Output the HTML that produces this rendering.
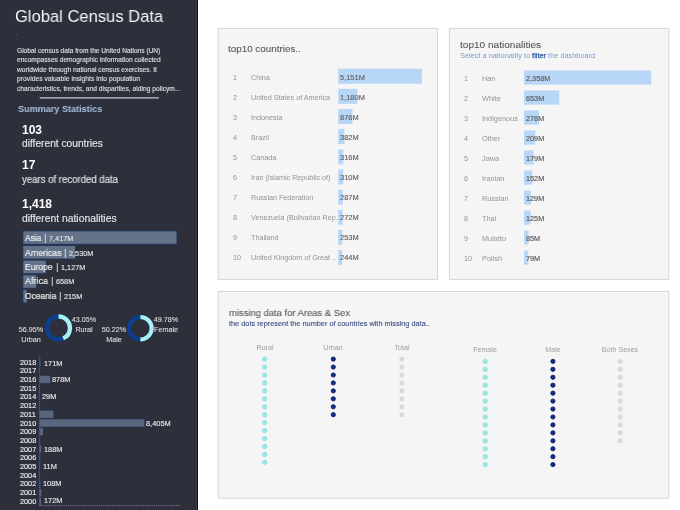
<!DOCTYPE html>
<html lang="en">
<head>
<meta charset="utf-8">
<title>Global Census Data</title>
<style>
html,body{margin:0;padding:0;width:680px;height:510px;overflow:hidden;}
body{width:680px;height:510px;position:relative;overflow:hidden;background:#ffffff;font-family:"Liberation Sans",sans-serif;}
.t{position:absolute;white-space:nowrap;will-change:transform;}
#g{position:absolute;left:0;top:0;}
</style>
</head>
<body>
<svg id="g" width="680" height="510" viewBox="0 0 680 510">
<rect x="0" y="0" width="196.4" height="510" fill="#2d2f3b"/>
<rect x="196.3" y="0" width="1.7" height="510" fill="#0e0f1b"/>
<rect x="16.2" y="34.4" width="0.9" height="0.9" fill="#6a6d7c"/>
<rect x="39.7" y="97.1" width="119.2" height="1.5" fill="#a9afc4"/>
<rect x="22.7" y="230.7" width="154.5" height="13.8" fill="#213c6b"/>
<rect x="23.4" y="231.4" width="153.1" height="12.4" fill="#647389"/>
<rect x="22.7" y="245.35" width="53" height="13.8" fill="#213c6b"/>
<rect x="23.4" y="246.05" width="51.6" height="12.4" fill="#647389"/>
<rect x="22.7" y="260" width="23.6" height="13.8" fill="#213c6b"/>
<rect x="23.4" y="260.7" width="22.2" height="12.4" fill="#647389"/>
<rect x="22.7" y="274.65" width="14" height="13.8" fill="#213c6b"/>
<rect x="23.4" y="275.35" width="12.6" height="12.4" fill="#647389"/>
<rect x="22.7" y="289.3" width="4.5" height="13.8" fill="#213c6b"/>
<rect x="23.4" y="290" width="3.1" height="12.4" fill="#647389"/>
<circle cx="58.5" cy="327.9" r="11.45" fill="none" stroke="#0c3f94" stroke-width="4.3"/>
<circle cx="58.5" cy="327.9" r="11.45" fill="none" stroke="#a6f1f2" stroke-width="4.3" stroke-dasharray="30.97 71.94" transform="rotate(-90 58.5 327.9)"/>
<circle cx="140.4" cy="328.2" r="11.25" fill="none" stroke="#0c3f94" stroke-width="4.1"/>
<circle cx="140.4" cy="328.2" r="11.25" fill="none" stroke="#a6f1f2" stroke-width="4.1" stroke-dasharray="35.19 70.69" transform="rotate(-90 140.4 328.2)"/>
<rect x="39.3" y="358.1" width="1.8" height="7.9" fill="#2a4473"/>
<rect x="39.3" y="366.81" width="1" height="7.9" fill="#2a4473"/>
<rect x="39.3" y="375.51" width="11.2" height="7.9" fill="#2a4473"/>
<rect x="39.7" y="375.91" width="10.4" height="7.1" fill="#5a667e"/>
<rect x="39.3" y="384.22" width="0.9" height="7.9" fill="#2a4473"/>
<rect x="39.3" y="392.92" width="1" height="7.9" fill="#2a4473"/>
<rect x="39.3" y="401.63" width="1" height="7.9" fill="#2a4473"/>
<rect x="39.3" y="410.34" width="14.4" height="7.9" fill="#2a4473"/>
<rect x="39.7" y="410.74" width="13.6" height="7.1" fill="#5a667e"/>
<rect x="39.3" y="419.04" width="105.3" height="7.9" fill="#2a4473"/>
<rect x="39.7" y="419.44" width="104.5" height="7.1" fill="#5a667e"/>
<rect x="39.3" y="427.75" width="4" height="7.9" fill="#2a4473"/>
<rect x="39.7" y="428.15" width="3.2" height="7.1" fill="#5a667e"/>
<rect x="39.3" y="436.45" width="1" height="7.9" fill="#2a4473"/>
<rect x="39.3" y="445.16" width="2.1" height="7.9" fill="#2a4473"/>
<rect x="39.7" y="445.56" width="1.3" height="7.1" fill="#5a667e"/>
<rect x="39.3" y="453.87" width="1.6" height="7.9" fill="#2a4473"/>
<rect x="39.3" y="462.57" width="1" height="7.9" fill="#2a4473"/>
<rect x="39.3" y="471.28" width="1" height="7.9" fill="#2a4473"/>
<rect x="39.3" y="479.98" width="1.6" height="7.9" fill="#2a4473"/>
<rect x="39.3" y="488.69" width="2.2" height="7.9" fill="#2a4473"/>
<rect x="39.7" y="489.09" width="1.4" height="7.1" fill="#5a667e"/>
<rect x="39.3" y="497.4" width="2.1" height="7.9" fill="#2a4473"/>
<rect x="39.7" y="497.8" width="1.3" height="7.1" fill="#5a667e"/>
<line x1="39.4" y1="357" x2="39.4" y2="505.6" stroke="#5570a8" stroke-width="0.8" stroke-dasharray="1.2 1"/>
<line x1="39.4" y1="505.6" x2="180" y2="505.6" stroke="#8a90a4" stroke-width="0.8" stroke-dasharray="1.2 1"/>
<rect x="218.2" y="28.4" width="219.4" height="251" fill="#f5f5f5" stroke="#d5d5d5" stroke-width="1"/>
<rect x="449.4" y="28.4" width="219.4" height="251" fill="#f5f5f5" stroke="#d5d5d5" stroke-width="1"/>
<rect x="218.2" y="291.5" width="450.6" height="206.7" fill="#f5f5f5" stroke="#d5d5d5" stroke-width="1"/>
<rect x="338.2" y="68.7" width="83.7" height="15" fill="#b8d7f7"/>
<rect x="232" y="86.65" width="192" height="1" fill="#f8f8f8"/>
<rect x="338.2" y="88.85" width="19.17" height="15" fill="#b8d7f7"/>
<rect x="232" y="106.8" width="192" height="1" fill="#f8f8f8"/>
<rect x="338.2" y="109" width="14.23" height="15" fill="#b8d7f7"/>
<rect x="232" y="126.95" width="192" height="1" fill="#f8f8f8"/>
<rect x="338.2" y="129.15" width="6.21" height="15" fill="#b8d7f7"/>
<rect x="232" y="147.1" width="192" height="1" fill="#f8f8f8"/>
<rect x="338.2" y="149.3" width="5.13" height="15" fill="#b8d7f7"/>
<rect x="232" y="167.25" width="192" height="1" fill="#f8f8f8"/>
<rect x="338.2" y="169.45" width="5.04" height="15" fill="#b8d7f7"/>
<rect x="232" y="187.4" width="192" height="1" fill="#f8f8f8"/>
<rect x="338.2" y="189.6" width="4.66" height="15" fill="#b8d7f7"/>
<rect x="232" y="207.55" width="192" height="1" fill="#f8f8f8"/>
<rect x="338.2" y="209.75" width="4.42" height="15" fill="#b8d7f7"/>
<rect x="232" y="227.7" width="192" height="1" fill="#f8f8f8"/>
<rect x="338.2" y="229.9" width="4.11" height="15" fill="#b8d7f7"/>
<rect x="232" y="247.85" width="192" height="1" fill="#f8f8f8"/>
<rect x="338.2" y="250.05" width="3.96" height="15" fill="#b8d7f7"/>
<rect x="524" y="70.5" width="127.2" height="14.1" fill="#b8d7f7"/>
<rect x="463" y="87.6" width="192" height="1" fill="#f8f8f8"/>
<rect x="524" y="90.5" width="35.23" height="14.1" fill="#b8d7f7"/>
<rect x="463" y="107.6" width="192" height="1" fill="#f8f8f8"/>
<rect x="524" y="110.5" width="15" height="14.1" fill="#b8d7f7"/>
<rect x="463" y="127.6" width="192" height="1" fill="#f8f8f8"/>
<rect x="524" y="130.5" width="11.27" height="14.1" fill="#b8d7f7"/>
<rect x="463" y="147.6" width="192" height="1" fill="#f8f8f8"/>
<rect x="524" y="150.5" width="9.66" height="14.1" fill="#b8d7f7"/>
<rect x="463" y="167.6" width="192" height="1" fill="#f8f8f8"/>
<rect x="524" y="170.5" width="8.2" height="14.1" fill="#b8d7f7"/>
<rect x="463" y="187.6" width="192" height="1" fill="#f8f8f8"/>
<rect x="524" y="190.5" width="6.96" height="14.1" fill="#b8d7f7"/>
<rect x="463" y="207.6" width="192" height="1" fill="#f8f8f8"/>
<rect x="524" y="210.5" width="6.74" height="14.1" fill="#b8d7f7"/>
<rect x="463" y="227.6" width="192" height="1" fill="#f8f8f8"/>
<rect x="524" y="230.5" width="4.59" height="14.1" fill="#b8d7f7"/>
<rect x="463" y="247.6" width="192" height="1" fill="#f8f8f8"/>
<rect x="524" y="250.5" width="4.26" height="14.1" fill="#b8d7f7"/>
<circle cx="264.7" cy="359.1" r="2.6" fill="#99e6e4"/>
<circle cx="264.7" cy="367.04" r="2.6" fill="#99e6e4"/>
<circle cx="264.7" cy="374.98" r="2.6" fill="#99e6e4"/>
<circle cx="264.7" cy="382.92" r="2.6" fill="#99e6e4"/>
<circle cx="264.7" cy="390.86" r="2.6" fill="#99e6e4"/>
<circle cx="264.7" cy="398.8" r="2.6" fill="#99e6e4"/>
<circle cx="264.7" cy="406.74" r="2.6" fill="#99e6e4"/>
<circle cx="264.7" cy="414.68" r="2.6" fill="#99e6e4"/>
<circle cx="264.7" cy="422.62" r="2.6" fill="#99e6e4"/>
<circle cx="264.7" cy="430.56" r="2.6" fill="#99e6e4"/>
<circle cx="264.7" cy="438.5" r="2.6" fill="#99e6e4"/>
<circle cx="264.7" cy="446.44" r="2.6" fill="#99e6e4"/>
<circle cx="264.7" cy="454.38" r="2.6" fill="#99e6e4"/>
<circle cx="264.7" cy="462.32" r="2.6" fill="#99e6e4"/>
<circle cx="333.3" cy="359.1" r="2.1" fill="#122c8a" stroke="#0a1d6a" stroke-width="0.9"/>
<circle cx="333.3" cy="367.04" r="2.1" fill="#122c8a" stroke="#0a1d6a" stroke-width="0.9"/>
<circle cx="333.3" cy="374.98" r="2.1" fill="#122c8a" stroke="#0a1d6a" stroke-width="0.9"/>
<circle cx="333.3" cy="382.92" r="2.1" fill="#122c8a" stroke="#0a1d6a" stroke-width="0.9"/>
<circle cx="333.3" cy="390.86" r="2.1" fill="#122c8a" stroke="#0a1d6a" stroke-width="0.9"/>
<circle cx="333.3" cy="398.8" r="2.1" fill="#122c8a" stroke="#0a1d6a" stroke-width="0.9"/>
<circle cx="333.3" cy="406.74" r="2.1" fill="#122c8a" stroke="#0a1d6a" stroke-width="0.9"/>
<circle cx="333.3" cy="414.68" r="2.1" fill="#122c8a" stroke="#0a1d6a" stroke-width="0.9"/>
<circle cx="401.9" cy="359.1" r="2.5" fill="#d9d9d9"/>
<circle cx="401.9" cy="367.04" r="2.5" fill="#d9d9d9"/>
<circle cx="401.9" cy="374.98" r="2.5" fill="#d9d9d9"/>
<circle cx="401.9" cy="382.92" r="2.5" fill="#d9d9d9"/>
<circle cx="401.9" cy="390.86" r="2.5" fill="#d9d9d9"/>
<circle cx="401.9" cy="398.8" r="2.5" fill="#d9d9d9"/>
<circle cx="401.9" cy="406.74" r="2.5" fill="#d9d9d9"/>
<circle cx="401.9" cy="414.68" r="2.5" fill="#d9d9d9"/>
<circle cx="485.3" cy="361.4" r="2.6" fill="#99e6e4"/>
<circle cx="485.3" cy="369.34" r="2.6" fill="#99e6e4"/>
<circle cx="485.3" cy="377.28" r="2.6" fill="#99e6e4"/>
<circle cx="485.3" cy="385.22" r="2.6" fill="#99e6e4"/>
<circle cx="485.3" cy="393.16" r="2.6" fill="#99e6e4"/>
<circle cx="485.3" cy="401.1" r="2.6" fill="#99e6e4"/>
<circle cx="485.3" cy="409.04" r="2.6" fill="#99e6e4"/>
<circle cx="485.3" cy="416.98" r="2.6" fill="#99e6e4"/>
<circle cx="485.3" cy="424.92" r="2.6" fill="#99e6e4"/>
<circle cx="485.3" cy="432.86" r="2.6" fill="#99e6e4"/>
<circle cx="485.3" cy="440.8" r="2.6" fill="#99e6e4"/>
<circle cx="485.3" cy="448.74" r="2.6" fill="#99e6e4"/>
<circle cx="485.3" cy="456.68" r="2.6" fill="#99e6e4"/>
<circle cx="485.3" cy="464.62" r="2.6" fill="#99e6e4"/>
<circle cx="552.9" cy="361.4" r="2.1" fill="#122c8a" stroke="#0a1d6a" stroke-width="0.9"/>
<circle cx="552.9" cy="369.34" r="2.1" fill="#122c8a" stroke="#0a1d6a" stroke-width="0.9"/>
<circle cx="552.9" cy="377.28" r="2.1" fill="#122c8a" stroke="#0a1d6a" stroke-width="0.9"/>
<circle cx="552.9" cy="385.22" r="2.1" fill="#122c8a" stroke="#0a1d6a" stroke-width="0.9"/>
<circle cx="552.9" cy="393.16" r="2.1" fill="#122c8a" stroke="#0a1d6a" stroke-width="0.9"/>
<circle cx="552.9" cy="401.1" r="2.1" fill="#122c8a" stroke="#0a1d6a" stroke-width="0.9"/>
<circle cx="552.9" cy="409.04" r="2.1" fill="#122c8a" stroke="#0a1d6a" stroke-width="0.9"/>
<circle cx="552.9" cy="416.98" r="2.1" fill="#122c8a" stroke="#0a1d6a" stroke-width="0.9"/>
<circle cx="552.9" cy="424.92" r="2.1" fill="#122c8a" stroke="#0a1d6a" stroke-width="0.9"/>
<circle cx="552.9" cy="432.86" r="2.1" fill="#122c8a" stroke="#0a1d6a" stroke-width="0.9"/>
<circle cx="552.9" cy="440.8" r="2.1" fill="#122c8a" stroke="#0a1d6a" stroke-width="0.9"/>
<circle cx="552.9" cy="448.74" r="2.1" fill="#122c8a" stroke="#0a1d6a" stroke-width="0.9"/>
<circle cx="552.9" cy="456.68" r="2.1" fill="#122c8a" stroke="#0a1d6a" stroke-width="0.9"/>
<circle cx="552.9" cy="464.62" r="2.1" fill="#122c8a" stroke="#0a1d6a" stroke-width="0.9"/>
<circle cx="620.2" cy="361.4" r="2.5" fill="#d9d9d9"/>
<circle cx="620.2" cy="369.34" r="2.5" fill="#d9d9d9"/>
<circle cx="620.2" cy="377.28" r="2.5" fill="#d9d9d9"/>
<circle cx="620.2" cy="385.22" r="2.5" fill="#d9d9d9"/>
<circle cx="620.2" cy="393.16" r="2.5" fill="#d9d9d9"/>
<circle cx="620.2" cy="401.1" r="2.5" fill="#d9d9d9"/>
<circle cx="620.2" cy="409.04" r="2.5" fill="#d9d9d9"/>
<circle cx="620.2" cy="416.98" r="2.5" fill="#d9d9d9"/>
<circle cx="620.2" cy="424.92" r="2.5" fill="#d9d9d9"/>
<circle cx="620.2" cy="432.86" r="2.5" fill="#d9d9d9"/>
<circle cx="620.2" cy="440.8" r="2.5" fill="#d9d9d9"/>
</svg>
<div class="t" style="left:15.2px;top:6px;font-size:17.2px;line-height:20px;color:#f6f6f8;transform:scaleX(0.963);transform-origin:left center;">Global Census Data</div>
<div class="t" style="left:16.5px;top:47px;font-size:6.6px;line-height:7px;color:#dcdee3;-webkit-text-stroke:0.15px #dcdee3;">Global census data from the United Nations (UN)</div>
<div class="t" style="left:16.5px;top:56px;font-size:6.6px;line-height:7px;color:#dcdee3;transform:scaleX(1.005);transform-origin:left center;-webkit-text-stroke:0.15px #dcdee3;">encompasses demographic information collected</div>
<div class="t" style="left:16.5px;top:66px;font-size:6.6px;line-height:7px;color:#dcdee3;transform:scaleX(1.013);transform-origin:left center;-webkit-text-stroke:0.15px #dcdee3;">worldwide through national census exercises. It</div>
<div class="t" style="left:16.5px;top:75px;font-size:6.6px;line-height:7px;color:#dcdee3;transform:scaleX(1.024);transform-origin:left center;-webkit-text-stroke:0.15px #dcdee3;">provides valuable insights into population</div>
<div class="t" style="left:16.5px;top:85px;font-size:6.6px;line-height:7px;color:#dcdee3;transform:scaleX(1.014);transform-origin:left center;-webkit-text-stroke:0.15px #dcdee3;">characteristics, trends, and disparities, aiding policym...</div>
<div class="t" style="left:18.1px;top:103px;font-size:9.5px;line-height:11px;color:#a9c3e3;font-weight:700;transform:scaleX(0.956);transform-origin:left center;">Summary Statistics</div>
<div class="t" style="left:22.2px;top:123px;font-size:12px;line-height:14px;color:#ffffff;font-weight:700;">103</div>
<div class="t" style="left:22.2px;top:138px;font-size:10px;line-height:11px;color:#e4e4e6;transform:scaleX(1.019);transform-origin:left center;-webkit-text-stroke:0.15px #e4e4e6;">different countries</div>
<div class="t" style="left:22.2px;top:158px;font-size:12px;line-height:14px;color:#ffffff;font-weight:700;">17</div>
<div class="t" style="left:22.2px;top:174px;font-size:10px;line-height:11px;color:#e4e4e6;transform:scaleX(0.959);transform-origin:left center;-webkit-text-stroke:0.15px #e4e4e6;">years of recorded data</div>
<div class="t" style="left:22.2px;top:197px;font-size:12px;line-height:14px;color:#ffffff;font-weight:700;">1,418</div>
<div class="t" style="left:22.2px;top:213px;font-size:10px;line-height:11px;color:#e4e4e6;transform:scaleX(1.033);transform-origin:left center;-webkit-text-stroke:0.15px #e4e4e6;">different nationalities</div>
<div class="t" style="left:25.3px;top:232px;font-size:9.6px;line-height:11px;color:#eeeeee;transform:scaleX(0.873);transform-origin:left center;-webkit-text-stroke:0.2px #eeeeee;">Asia</div>
<div class="t" style="left:44.2px;top:232px;font-size:9.6px;line-height:11px;color:#e6e6e8;">|</div>
<div class="t" style="left:49.2px;top:234px;font-size:7.3px;line-height:9px;color:#dcdee2;-webkit-text-stroke:0.2px #dcdee2;">7,417M</div>
<div class="t" style="left:25.3px;top:247px;font-size:9.6px;line-height:11px;color:#eeeeee;transform:scaleX(0.912);transform-origin:left center;-webkit-text-stroke:0.2px #eeeeee;">Americas</div>
<div class="t" style="left:64.4px;top:247px;font-size:9.6px;line-height:11px;color:#e6e6e8;">|</div>
<div class="t" style="left:69.4px;top:249px;font-size:7.3px;line-height:9px;color:#dcdee2;-webkit-text-stroke:0.2px #dcdee2;">2,530M</div>
<div class="t" style="left:25.3px;top:261px;font-size:9.6px;line-height:11px;color:#eeeeee;transform:scaleX(0.892);transform-origin:left center;-webkit-text-stroke:0.2px #eeeeee;">Europe</div>
<div class="t" style="left:55.5px;top:261px;font-size:9.6px;line-height:11px;color:#e6e6e8;">|</div>
<div class="t" style="left:60.5px;top:263px;font-size:7.3px;line-height:9px;color:#dcdee2;-webkit-text-stroke:0.2px #dcdee2;">1,127M</div>
<div class="t" style="left:25.3px;top:275px;font-size:9.6px;line-height:11px;color:#eeeeee;transform:scaleX(0.937);transform-origin:left center;-webkit-text-stroke:0.2px #eeeeee;">Africa</div>
<div class="t" style="left:50.9px;top:275px;font-size:9.6px;line-height:11px;color:#e6e6e8;">|</div>
<div class="t" style="left:55.9px;top:277px;font-size:7.3px;line-height:9px;color:#dcdee2;-webkit-text-stroke:0.2px #dcdee2;">658M</div>
<div class="t" style="left:25.3px;top:290px;font-size:9.6px;line-height:11px;color:#eeeeee;transform:scaleX(0.875);transform-origin:left center;-webkit-text-stroke:0.2px #eeeeee;">Oceania</div>
<div class="t" style="left:59.2px;top:290px;font-size:9.6px;line-height:11px;color:#e6e6e8;">|</div>
<div class="t" style="left:64.2px;top:292px;font-size:7.3px;line-height:9px;color:#dcdee2;-webkit-text-stroke:0.2px #dcdee2;">215M</div>
<div class="t" style="left:-8.7px;width:80px;text-align:center;top:325px;font-size:7.2px;line-height:9px;color:#dcdce0;-webkit-text-stroke:0.12px #dcdce0;">56.95%</div>
<div class="t" style="left:-8.7px;width:80px;text-align:center;top:335px;font-size:7.2px;line-height:9px;color:#dcdce0;-webkit-text-stroke:0.12px #dcdce0;">Urban</div>
<div class="t" style="left:44px;width:80px;text-align:center;top:315px;font-size:7.2px;line-height:9px;color:#dcdce0;-webkit-text-stroke:0.12px #dcdce0;">43.05%</div>
<div class="t" style="left:44px;width:80px;text-align:center;top:325px;font-size:7.2px;line-height:9px;color:#dcdce0;-webkit-text-stroke:0.12px #dcdce0;">Rural</div>
<div class="t" style="left:73.7px;width:80px;text-align:center;top:325px;font-size:7.2px;line-height:9px;color:#dcdce0;-webkit-text-stroke:0.12px #dcdce0;">50.22%</div>
<div class="t" style="left:73.7px;width:80px;text-align:center;top:335px;font-size:7.2px;line-height:9px;color:#dcdce0;-webkit-text-stroke:0.12px #dcdce0;">Male</div>
<div class="t" style="left:126px;width:80px;text-align:center;top:315px;font-size:7.2px;line-height:9px;color:#dcdce0;-webkit-text-stroke:0.12px #dcdce0;">49.78%</div>
<div class="t" style="left:126px;width:80px;text-align:center;top:325px;font-size:7.2px;line-height:9px;color:#dcdce0;-webkit-text-stroke:0.12px #dcdce0;">Female</div>
<div class="t" style="left:20px;top:358px;font-size:7.3px;line-height:9px;color:#ececee;-webkit-text-stroke:0.15px #ececee;">2018</div>
<div class="t" style="left:43.6px;top:359px;font-size:7.4px;line-height:9px;color:#e4e4e8;-webkit-text-stroke:0.15px #e4e4e8;">171M</div>
<div class="t" style="left:20px;top:366px;font-size:7.3px;line-height:9px;color:#ececee;-webkit-text-stroke:0.15px #ececee;">2017</div>
<div class="t" style="left:20px;top:375px;font-size:7.3px;line-height:9px;color:#ececee;-webkit-text-stroke:0.15px #ececee;">2016</div>
<div class="t" style="left:52px;top:375px;font-size:7.4px;line-height:9px;color:#e4e4e8;-webkit-text-stroke:0.15px #e4e4e8;">878M</div>
<div class="t" style="left:20px;top:384px;font-size:7.3px;line-height:9px;color:#ececee;-webkit-text-stroke:0.15px #ececee;">2015</div>
<div class="t" style="left:20px;top:392px;font-size:7.3px;line-height:9px;color:#ececee;-webkit-text-stroke:0.15px #ececee;">2014</div>
<div class="t" style="left:42.4px;top:392px;font-size:7.4px;line-height:9px;color:#e4e4e8;-webkit-text-stroke:0.15px #e4e4e8;">29M</div>
<div class="t" style="left:20px;top:401px;font-size:7.3px;line-height:9px;color:#ececee;-webkit-text-stroke:0.15px #ececee;">2012</div>
<div class="t" style="left:20px;top:410px;font-size:7.3px;line-height:9px;color:#ececee;-webkit-text-stroke:0.15px #ececee;">2011</div>
<div class="t" style="left:20px;top:419px;font-size:7.3px;line-height:9px;color:#ececee;-webkit-text-stroke:0.15px #ececee;">2010</div>
<div class="t" style="left:146.3px;top:419px;font-size:7.4px;line-height:9px;color:#e4e4e8;-webkit-text-stroke:0.15px #e4e4e8;">8,405M</div>
<div class="t" style="left:20px;top:427px;font-size:7.3px;line-height:9px;color:#ececee;-webkit-text-stroke:0.15px #ececee;">2009</div>
<div class="t" style="left:20px;top:436px;font-size:7.3px;line-height:9px;color:#ececee;-webkit-text-stroke:0.15px #ececee;">2008</div>
<div class="t" style="left:20px;top:445px;font-size:7.3px;line-height:9px;color:#ececee;-webkit-text-stroke:0.15px #ececee;">2007</div>
<div class="t" style="left:43.6px;top:445px;font-size:7.4px;line-height:9px;color:#e4e4e8;-webkit-text-stroke:0.15px #e4e4e8;">188M</div>
<div class="t" style="left:20px;top:453px;font-size:7.3px;line-height:9px;color:#ececee;-webkit-text-stroke:0.15px #ececee;">2006</div>
<div class="t" style="left:20px;top:462px;font-size:7.3px;line-height:9px;color:#ececee;-webkit-text-stroke:0.15px #ececee;">2005</div>
<div class="t" style="left:42.6px;top:462px;font-size:7.4px;line-height:9px;color:#e4e4e8;-webkit-text-stroke:0.15px #e4e4e8;">11M</div>
<div class="t" style="left:20px;top:471px;font-size:7.3px;line-height:9px;color:#ececee;-webkit-text-stroke:0.15px #ececee;">2004</div>
<div class="t" style="left:20px;top:479px;font-size:7.3px;line-height:9px;color:#ececee;-webkit-text-stroke:0.15px #ececee;">2002</div>
<div class="t" style="left:42.7px;top:479px;font-size:7.4px;line-height:9px;color:#e4e4e8;-webkit-text-stroke:0.15px #e4e4e8;">108M</div>
<div class="t" style="left:20px;top:488px;font-size:7.3px;line-height:9px;color:#ececee;-webkit-text-stroke:0.15px #ececee;">2001</div>
<div class="t" style="left:20px;top:497px;font-size:7.3px;line-height:9px;color:#ececee;-webkit-text-stroke:0.15px #ececee;">2000</div>
<div class="t" style="left:43.6px;top:496px;font-size:7.4px;line-height:9px;color:#e4e4e8;-webkit-text-stroke:0.15px #e4e4e8;">172M</div>
<div class="t" style="left:227.9px;top:43px;font-size:9.8px;line-height:11px;color:#555555;transform:scaleX(1.005);transform-origin:left center;-webkit-text-stroke:0.08px #555555;">top10 countries..</div>
<div class="t" style="left:232.6px;top:73px;font-size:7.2px;line-height:9px;color:#939393;">1</div>
<div class="t" style="left:250.8px;top:73px;font-size:7.2px;line-height:9px;color:#939393;">China</div>
<div class="t" style="left:340px;top:73px;font-size:7.3px;line-height:9px;color:#5c5c5c;transform:scaleX(1.020);transform-origin:left center;-webkit-text-stroke:0.12px #5c5c5c;">5,151M</div>
<div class="t" style="left:232.6px;top:93px;font-size:7.2px;line-height:9px;color:#939393;">2</div>
<div class="t" style="left:250.8px;top:93px;font-size:7.2px;line-height:9px;color:#939393;">United States of America</div>
<div class="t" style="left:340px;top:93px;font-size:7.3px;line-height:9px;color:#5c5c5c;transform:scaleX(1.020);transform-origin:left center;-webkit-text-stroke:0.12px #5c5c5c;">1,180M</div>
<div class="t" style="left:232.6px;top:113px;font-size:7.2px;line-height:9px;color:#939393;">3</div>
<div class="t" style="left:250.8px;top:113px;font-size:7.2px;line-height:9px;color:#939393;">Indonesia</div>
<div class="t" style="left:340px;top:113px;font-size:7.3px;line-height:9px;color:#5c5c5c;transform:scaleX(1.020);transform-origin:left center;-webkit-text-stroke:0.12px #5c5c5c;">876M</div>
<div class="t" style="left:232.6px;top:133px;font-size:7.2px;line-height:9px;color:#939393;">4</div>
<div class="t" style="left:250.8px;top:133px;font-size:7.2px;line-height:9px;color:#939393;">Brazil</div>
<div class="t" style="left:340px;top:133px;font-size:7.3px;line-height:9px;color:#5c5c5c;transform:scaleX(1.020);transform-origin:left center;-webkit-text-stroke:0.12px #5c5c5c;">382M</div>
<div class="t" style="left:232.6px;top:153px;font-size:7.2px;line-height:9px;color:#939393;">5</div>
<div class="t" style="left:250.8px;top:153px;font-size:7.2px;line-height:9px;color:#939393;">Canada</div>
<div class="t" style="left:340px;top:153px;font-size:7.3px;line-height:9px;color:#5c5c5c;transform:scaleX(1.020);transform-origin:left center;-webkit-text-stroke:0.12px #5c5c5c;">316M</div>
<div class="t" style="left:232.6px;top:173px;font-size:7.2px;line-height:9px;color:#939393;">6</div>
<div class="t" style="left:250.8px;top:173px;font-size:7.2px;line-height:9px;color:#939393;">Iran (Islamic Republic of)</div>
<div class="t" style="left:340px;top:173px;font-size:7.3px;line-height:9px;color:#5c5c5c;transform:scaleX(1.020);transform-origin:left center;-webkit-text-stroke:0.12px #5c5c5c;">310M</div>
<div class="t" style="left:232.6px;top:193px;font-size:7.2px;line-height:9px;color:#939393;">7</div>
<div class="t" style="left:250.8px;top:193px;font-size:7.2px;line-height:9px;color:#939393;">Russian Federation</div>
<div class="t" style="left:340px;top:193px;font-size:7.3px;line-height:9px;color:#5c5c5c;transform:scaleX(1.020);transform-origin:left center;-webkit-text-stroke:0.12px #5c5c5c;">287M</div>
<div class="t" style="left:232.6px;top:213px;font-size:7.2px;line-height:9px;color:#939393;">8</div>
<div class="t" style="left:250.8px;top:213px;font-size:7.2px;line-height:9px;color:#939393;">Venezuela (Bolivarian Rep..</div>
<div class="t" style="left:340px;top:213px;font-size:7.3px;line-height:9px;color:#5c5c5c;transform:scaleX(1.020);transform-origin:left center;-webkit-text-stroke:0.12px #5c5c5c;">272M</div>
<div class="t" style="left:232.6px;top:233px;font-size:7.2px;line-height:9px;color:#939393;">9</div>
<div class="t" style="left:250.8px;top:233px;font-size:7.2px;line-height:9px;color:#939393;">Thailand</div>
<div class="t" style="left:340px;top:233px;font-size:7.3px;line-height:9px;color:#5c5c5c;transform:scaleX(1.020);transform-origin:left center;-webkit-text-stroke:0.12px #5c5c5c;">253M</div>
<div class="t" style="left:232.6px;top:253px;font-size:7.2px;line-height:9px;color:#939393;">10</div>
<div class="t" style="left:250.8px;top:253px;font-size:7.2px;line-height:9px;color:#939393;">United Kingdom of Great ..</div>
<div class="t" style="left:340px;top:253px;font-size:7.3px;line-height:9px;color:#5c5c5c;transform:scaleX(1.020);transform-origin:left center;-webkit-text-stroke:0.12px #5c5c5c;">244M</div>
<div class="t" style="left:460px;top:40px;font-size:9.2px;line-height:10px;color:#555555;transform:scaleX(1.095);transform-origin:left center;-webkit-text-stroke:0.08px #555555;">top10 nationalities</div>
<div class="t" style="left:460px;top:51px;font-size:7.3px;line-height:9px;color:#7c9dcd;transform:scaleX(1.010);transform-origin:left center;">Select a nationality to <span style="color:#2c5a9c;-webkit-text-stroke:0.25px #2c5a9c">filter</span> the dashboard</div>
<div class="t" style="left:464px;top:74px;font-size:7.2px;line-height:9px;color:#939393;">1</div>
<div class="t" style="left:482.2px;top:74px;font-size:7.2px;line-height:9px;color:#939393;transform:scaleX(1.020);transform-origin:left center;">Han</div>
<div class="t" style="left:526px;top:74px;font-size:7.3px;line-height:9px;color:#5a5a5a;-webkit-text-stroke:0.15px #5a5a5a;">2,358M</div>
<div class="t" style="left:464px;top:94px;font-size:7.2px;line-height:9px;color:#939393;">2</div>
<div class="t" style="left:482.2px;top:94px;font-size:7.2px;line-height:9px;color:#939393;transform:scaleX(1.020);transform-origin:left center;">White</div>
<div class="t" style="left:526px;top:94px;font-size:7.3px;line-height:9px;color:#5a5a5a;-webkit-text-stroke:0.15px #5a5a5a;">653M</div>
<div class="t" style="left:464px;top:114px;font-size:7.2px;line-height:9px;color:#939393;">3</div>
<div class="t" style="left:482.2px;top:114px;font-size:7.2px;line-height:9px;color:#939393;transform:scaleX(1.020);transform-origin:left center;">Indigenous</div>
<div class="t" style="left:526px;top:114px;font-size:7.3px;line-height:9px;color:#5a5a5a;-webkit-text-stroke:0.15px #5a5a5a;">278M</div>
<div class="t" style="left:464px;top:134px;font-size:7.2px;line-height:9px;color:#939393;">4</div>
<div class="t" style="left:482.2px;top:134px;font-size:7.2px;line-height:9px;color:#939393;transform:scaleX(1.020);transform-origin:left center;">Other</div>
<div class="t" style="left:526px;top:134px;font-size:7.3px;line-height:9px;color:#5a5a5a;-webkit-text-stroke:0.15px #5a5a5a;">209M</div>
<div class="t" style="left:464px;top:154px;font-size:7.2px;line-height:9px;color:#939393;">5</div>
<div class="t" style="left:482.2px;top:154px;font-size:7.2px;line-height:9px;color:#939393;transform:scaleX(1.020);transform-origin:left center;">Jawa</div>
<div class="t" style="left:526px;top:154px;font-size:7.3px;line-height:9px;color:#5a5a5a;-webkit-text-stroke:0.15px #5a5a5a;">179M</div>
<div class="t" style="left:464px;top:174px;font-size:7.2px;line-height:9px;color:#939393;">6</div>
<div class="t" style="left:482.2px;top:174px;font-size:7.2px;line-height:9px;color:#939393;transform:scaleX(1.020);transform-origin:left center;">Iranian</div>
<div class="t" style="left:526px;top:174px;font-size:7.3px;line-height:9px;color:#5a5a5a;-webkit-text-stroke:0.15px #5a5a5a;">152M</div>
<div class="t" style="left:464px;top:194px;font-size:7.2px;line-height:9px;color:#939393;">7</div>
<div class="t" style="left:482.2px;top:194px;font-size:7.2px;line-height:9px;color:#939393;transform:scaleX(1.020);transform-origin:left center;">Russian</div>
<div class="t" style="left:526px;top:194px;font-size:7.3px;line-height:9px;color:#5a5a5a;-webkit-text-stroke:0.15px #5a5a5a;">129M</div>
<div class="t" style="left:464px;top:214px;font-size:7.2px;line-height:9px;color:#939393;">8</div>
<div class="t" style="left:482.2px;top:214px;font-size:7.2px;line-height:9px;color:#939393;transform:scaleX(1.020);transform-origin:left center;">Thai</div>
<div class="t" style="left:526px;top:214px;font-size:7.3px;line-height:9px;color:#5a5a5a;-webkit-text-stroke:0.15px #5a5a5a;">125M</div>
<div class="t" style="left:464px;top:234px;font-size:7.2px;line-height:9px;color:#939393;">9</div>
<div class="t" style="left:482.2px;top:234px;font-size:7.2px;line-height:9px;color:#939393;transform:scaleX(1.020);transform-origin:left center;">Mulatto</div>
<div class="t" style="left:526px;top:234px;font-size:7.3px;line-height:9px;color:#5a5a5a;-webkit-text-stroke:0.15px #5a5a5a;">85M</div>
<div class="t" style="left:464px;top:254px;font-size:7.2px;line-height:9px;color:#939393;">10</div>
<div class="t" style="left:482.2px;top:254px;font-size:7.2px;line-height:9px;color:#939393;transform:scaleX(1.020);transform-origin:left center;">Polish</div>
<div class="t" style="left:526px;top:254px;font-size:7.3px;line-height:9px;color:#5a5a5a;-webkit-text-stroke:0.15px #5a5a5a;">79M</div>
<div class="t" style="left:228.9px;top:307px;font-size:9.6px;line-height:11px;color:#5c5c5c;transform:scaleX(0.982);transform-origin:left center;-webkit-text-stroke:0.12px #5c5c5c;">missing data for Areas &amp; Sex</div>
<div class="t" style="left:229px;top:319px;font-size:7.35px;line-height:9px;color:#3a4a80;-webkit-text-stroke:0.1px #3a4a80;">the dots represent the number of countries with missing data..</div>
<div class="t" style="left:224.7px;width:80px;text-align:center;top:344px;font-size:7.1px;line-height:8px;color:#9c9c9c;">Rural</div>
<div class="t" style="left:293.3px;width:80px;text-align:center;top:344px;font-size:7.1px;line-height:8px;color:#9c9c9c;">Urban</div>
<div class="t" style="left:361.9px;width:80px;text-align:center;top:344px;font-size:7.1px;line-height:8px;color:#9c9c9c;">Total</div>
<div class="t" style="left:445.3px;width:80px;text-align:center;top:346px;font-size:7.1px;line-height:8px;color:#9c9c9c;">Female</div>
<div class="t" style="left:512.9px;width:80px;text-align:center;top:346px;font-size:7.1px;line-height:8px;color:#9c9c9c;">Male</div>
<div class="t" style="left:580.2px;width:80px;text-align:center;top:346px;font-size:7.1px;line-height:8px;color:#9c9c9c;">Both Sexes</div>
</body>
</html>
